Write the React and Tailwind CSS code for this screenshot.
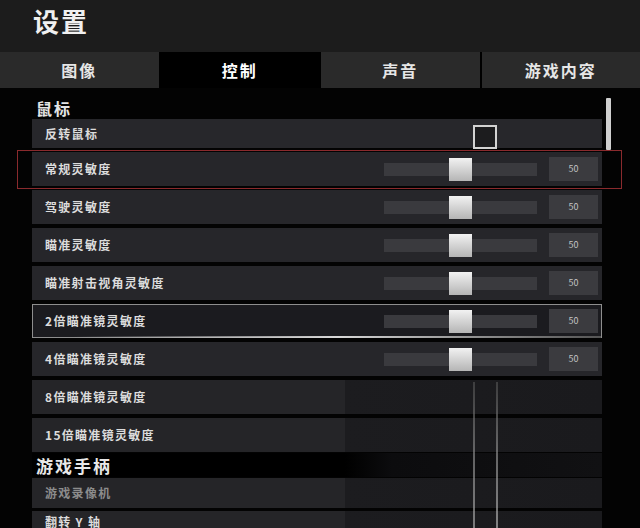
import React from "react";

const font = { fontFamily: '"Noto Sans CJK SC", "Noto Sans", sans-serif' };

const tabs = ["图像", "控制", "声音", "游戏内容"];

const sliders = [
  { label: "常规灵敏度", value: 50, highlight: true },
  { label: "驾驶灵敏度", value: 50 },
  { label: "瞄准灵敏度", value: 50 },
  { label: "瞄准射击视角灵敏度", value: 50 },
  { label: "2倍瞄准镜灵敏度", value: 50, selected: true },
  { label: "4倍瞄准镜灵敏度", value: 50 },
];

function Slider({ value }) {
  return (
    <div className="flex items-center">
      <div className="relative w-[153px] h-[13px] bg-[#3a3a3e] flex items-center">
        <div className="absolute left-[65px] top-[-5px] w-[23px] h-[23px] bg-gradient-to-b from-[#f2f2f2] to-[#b5b5b5]" />
      </div>
      <div className="ml-[12px] w-[49px] h-[24px] bg-[#3b3b3f] flex items-center justify-center text-[9px] text-[#c4c4c4]">
        {value}
      </div>
    </div>
  );
}

function SliderRow({ label, value, highlight, selected }) {
  return (
    <div
      className={`relative h-[34px] mt-[4px] flex items-center justify-between ${
        selected ? "pl-[12px] pr-[3px] bg-[#1b1b1f] border border-[#8e8e8e]" : "pl-[13px] pr-[4px] bg-[#26262a]"
      }`}
    >
      <span className="text-[12px] leading-none font-bold tracking-[1.3px] text-[#dcdcdc]">{label}</span>
      <Slider value={value} />
      {highlight && (
        <div className="absolute left-[-15px] right-[-20px] top-[-2px] bottom-[-3px] border-[1.5px] border-[#8a2a2d]" />
      )}
      {selected && (
        <div className="absolute left-[40px] right-0 bottom-[-1px] h-[2px] bg-gradient-to-r from-transparent via-[#d8d8d8] to-[#555]" />
      )}
    </div>
  );
}

function PlainRow({ label, dim, className = "" }) {
  return (
    <div
      className={`flex pl-[13px] bg-[linear-gradient(to_right,#252528_313px,#1c1c1f_313px,#1a1a1d_100%)] ${className}`}
    >
      <span
        className={`text-[12px] leading-none font-bold tracking-[1.3px] ${dim ? "text-[#8c8c8c]" : "text-[#dcdcdc]"}`}
      >
        {label}
      </span>
    </div>
  );
}

export default function App() {
  return (
    <div className="w-[640px] h-[528px] overflow-hidden bg-[#030303] text-white" style={font}>
      {/* Header */}
      <div className="h-[52px] bg-[#1c1c1c] flex items-center pl-[33px]">
        <h1 className="text-[26px] leading-none font-bold tracking-[2px] text-[#f0f0f0] -mt-[10px]">设置</h1>
      </div>

      {/* Tabs */}
      <div className="h-[36px] flex gap-[2px] bg-black">
        {tabs.map((t, i) => (
          <div
            key={t}
            className={`flex-1 flex items-center justify-center text-[16px] leading-none font-bold tracking-[2px] ${
              i === 1 ? "bg-black text-white" : "bg-[#2a2a2a] text-[#e6e6e6]"
            }`}
          >
            {t}
          </div>
        ))}
      </div>

      {/* Body */}
      <div className="relative flex">
        <div className="ml-[32px] w-[570px]">
          <div className="h-[31px] pt-[12px] pl-[4px] text-[16px] leading-none font-bold tracking-[2px] text-[#e4e4e4]">
            鼠标
          </div>

          {/* invert mouse */}
          <div className="h-[29px] bg-[#27272b] flex items-center pl-[13px]">
            <span className="text-[12px] leading-none font-bold tracking-[1.3px] text-[#dcdcdc]">反转鼠标</span>
            <div className="ml-auto mr-[105px] mt-[6px] w-[24px] h-[24px] border-2 border-[#d2d2d2] bg-[#1c1c1e]" />
          </div>

          {sliders.map((s) => (
            <SliderRow key={s.label} {...s} />
          ))}

          <PlainRow label="8倍瞄准镜灵敏度" className="h-[34px] mt-[4px] items-center" />
          <PlainRow label="15倍瞄准镜灵敏度" className="h-[34px] mt-[4px] items-center" />

          <div className="h-[24px] mt-[1px] pl-[4px] flex items-center bg-[linear-gradient(to_right,#000_313px,#0c0c0e_360px,#111113_100%)] text-[17px] leading-none font-bold tracking-[2px] text-[#e8e8e8]">
            游戏手柄
          </div>
          <PlainRow label="游戏录像机" dim className="h-[30px] mt-[1px] items-center" />
          <PlainRow label="翻转 Y 轴" className="h-[20px] mt-[3px] items-start pt-[5px]" />
        </div>

        {/* scroll gutter */}
        <div className="flex-1 pl-[4px] pt-[10px]">
          <div className="w-[5px] h-[52px] bg-[#d0d0d0] rounded-[1px]" />
        </div>

        {/* screen artefacts over lower rows */}
        <div className="absolute left-[473px] top-[294px] bottom-0 w-[2px] bg-gradient-to-b from-[#555] via-[#9a9a9a] to-[#bdbdbd] opacity-60" />
        <div className="absolute left-[496px] top-[294px] bottom-0 w-[2px] bg-gradient-to-b from-[#555] via-[#a0a0a0] to-[#c8c8c8] opacity-60" />
      </div>
    </div>
  );
}
